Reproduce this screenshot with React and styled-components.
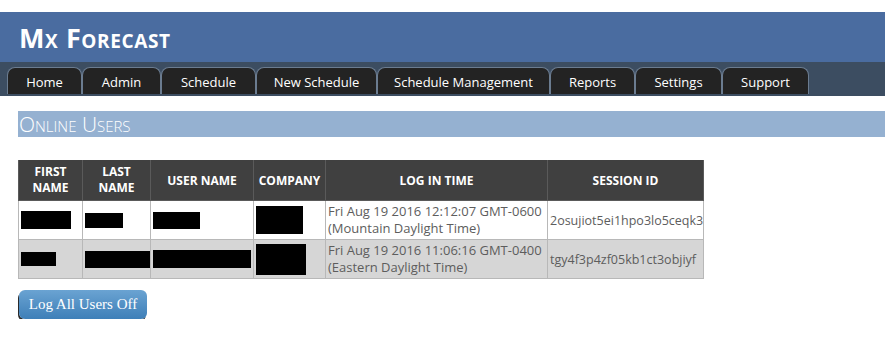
import styled, { createGlobalStyle } from "styled-components";

const GlobalStyle = createGlobalStyle`
	body {
		margin: 0;
		background: #fff;
		font-family: "Open Sans", "Noto Sans", sans-serif;
	}
`;

const tabs = [
	{ label: "Home", width: 75 },
	{ label: "Admin", width: 79 },
	{ label: "Schedule", width: 95 },
	{ label: "New Schedule", width: 121 },
	{ label: "Schedule Management", width: 173 },
	{ label: "Reports", width: 85 },
	{ label: "Settings", width: 87 },
	{ label: "Support", width: 87 },
];

const users = [
	{
		first: [50, 18],
		last: [38, 15],
		user: [47, 17],
		company: [47, 28],
		time: ["Fri Aug 19 2016 12:12:07 GMT-0600", "(Mountain Daylight Time)"],
		session: "2osujiot5ei1hpo3lo5ceqk3",
	},
	{
		first: [35, 14],
		last: [65, 17],
		user: [98, 18],
		company: [50, 31],
		time: ["Fri Aug 19 2016 11:06:16 GMT-0400", "(Eastern Daylight Time)"],
		session: "tgy4f3p4zf05kb1ct3objiyf",
	},
];

const App = () => {
	return (
		<>
			<GlobalStyle />
			<Page>
				<Header>
					<Brand>Mx Forecast</Brand>
				</Header>
				<NavBar>
					{tabs.map((t) => (
						<Tab key={t.label} $width={t.width}>
							{t.label}
						</Tab>
					))}
				</NavBar>
				<Content>
					<SectionTitle>Online Users</SectionTitle>
					<UsersTable>
						<colgroup>
							<col style={{ width: 64 }} />
							<col style={{ width: 68 }} />
							<col style={{ width: 103 }} />
							<col style={{ width: 72 }} />
							<col style={{ width: 222 }} />
							<col style={{ width: 156 }} />
						</colgroup>
						<thead>
							<tr>
								<Th>
									<HeadLine>FIRST</HeadLine>
									<HeadLine>NAME</HeadLine>
								</Th>
								<Th>
									<HeadLine>LAST</HeadLine>
									<HeadLine>NAME</HeadLine>
								</Th>
								<Th>USER NAME</Th>
								<Th>COMPANY</Th>
								<Th>LOG IN TIME</Th>
								<Th>SESSION ID</Th>
							</tr>
						</thead>
						<tbody>
							{users.map((u, i) => (
								<Row key={u.session} $alt={i % 2 === 1}>
									<Td>
										<Redacted style={{ width: u.first[0], height: u.first[1] }} />
									</Td>
									<Td>
										<Redacted style={{ width: u.last[0], height: u.last[1] }} />
									</Td>
									<Td>
										<Redacted style={{ width: u.user[0], height: u.user[1] }} />
									</Td>
									<Td>
										<Redacted style={{ width: u.company[0], height: u.company[1] }} />
									</Td>
									<Td>
										{u.time[0]}
										<br />
										{u.time[1]}
									</Td>
									<Td $small>{u.session}</Td>
								</Row>
							))}
						</tbody>
					</UsersTable>
					<LogOffButton>Log All Users Off</LogOffButton>
				</Content>
			</Page>
		</>
	);
};

const Page = styled.div`
	padding-top: 12px;
`;

const Header = styled.header`
	height: 50px;
	background: #4a6ca0;
	display: flex;
	align-items: center;
	padding-left: 19px;
`;

const Brand = styled.h1`
	margin: 0;
	color: #fff;
	font-size: 27px;
	font-weight: 700;
	font-variant: small-caps;
	letter-spacing: 0.6px;
`;

const NavBar = styled.nav`
	height: 34px;
	background: #3c4d61;
	display: flex;
	align-items: flex-end;
	padding-left: 7px;
	box-sizing: border-box;
	padding-bottom: 2px;
`;

const Tab = styled.div`
	width: ${(p) => p.$width}px;
	height: 27px;
	box-sizing: border-box;
	background: #232323;
	border: 1px solid #6b7c90;
	border-bottom: none;
	border-radius: 8px 8px 0 0;
	color: #fff;
	font-size: 13px;
	display: flex;
	align-items: center;
	justify-content: center;
	padding-top: 1px;
`;

const Content = styled.main`
	padding: 15px 0 0 18px;
`;

const SectionTitle = styled.h2`
	margin: 0 0 23px;
	height: 26px;
	background: #95b1d1;
	color: #fff;
	font-size: 21px;
	font-weight: 300;
	font-variant: small-caps;
	line-height: 27px;
	padding-left: 1px;
`;

const UsersTable = styled.table`
	border-collapse: collapse;
	width: 685px;
	table-layout: fixed;
	font-size: 13px;
`;

const Th = styled.th`
	background: #404040;
	color: #fff;
	font-weight: 700;
	font-size: 12px;
	height: 40px;
	padding: 0;
	border: 1px solid #5a5a5a;
	border-top: none;
`;

const HeadLine = styled.span`
	display: block;
	line-height: 16px;
`;

const Row = styled.tr`
	background: ${(p) => (p.$alt ? "#d6d6d6" : "#fff")};
	color: #5d5d5d;
`;

const Td = styled.td`
	border: 1px solid #b8b8b8;
	height: 38px;
	padding: 0 2px;
	line-height: 17px;
	white-space: nowrap;
	overflow: hidden;
	font-size: ${(p) => (p.$small ? "12.5px" : "13px")};
`;

const Redacted = styled.div`
	background: #000;
`;

const LogOffButton = styled.button`
	margin-top: 11px;
	margin-left: 1px;
	width: 128px;
	height: 29px;
	border: none;
	border-radius: 6px;
	background: linear-gradient(#6aa3d2, #3e7fb8);
	box-shadow: -1px 2px 0 #2a2a2a;
	color: #fff;
	font-family: "Liberation Serif", "DejaVu Serif", serif;
	font-size: 15px;
	padding: 0;
	cursor: pointer;
`;

export default App;
